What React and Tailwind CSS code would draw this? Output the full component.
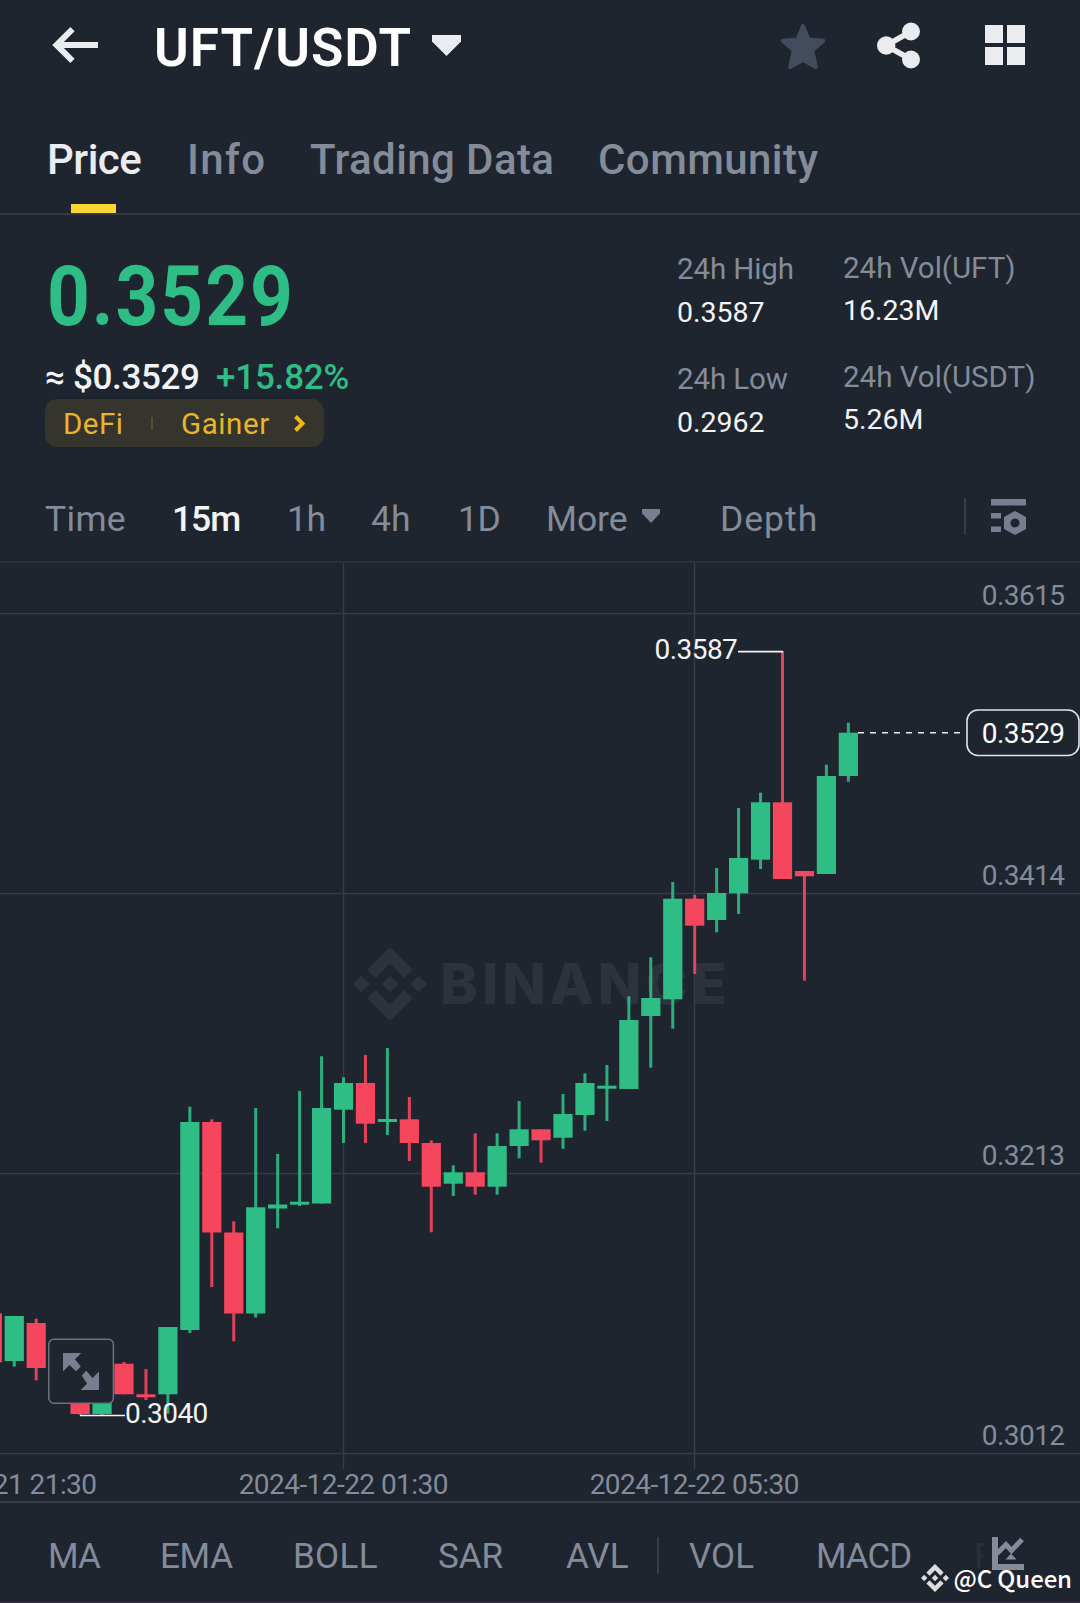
import React from 'react';

const UP = '#2ebd85';
const DOWN = '#f6465d';
const GRID = '#363c48';
const MUTED = '#848b99';

const TABS = [
  { label: 'Price', box: 'w-[140px]', text: 'tracking-[-0.5px]', active: true },
  { label: 'Info', box: 'w-[123px]', text: 'tracking-[1.4px]' },
  { label: 'Trading Data', box: 'w-[288px]', text: 'tracking-[0.4px]' },
  { label: 'Community', box: 'w-[240px]', text: 'tracking-[0.45px]' },
];

const STATS = [
  [
    { label: '24h High', value: '0.3587' },
    { label: '24h Low', value: '0.2962' },
  ],
  [
    { label: '24h Vol(UFT)', value: '16.23M' },
    { label: '24h Vol(USDT)', value: '5.26M' },
  ],
];

const INTERVALS = [
  { label: 'Time', cls: 'w-[127px] tracking-[0.3px]' },
  { label: '15m', cls: 'w-[115px] tracking-[-1.1px] font-medium text-[#f3f4f8]' },
  { label: '1h', cls: 'w-[84px] tracking-[-0.4px]' },
  { label: '4h', cls: 'w-[87px]' },
  { label: '1D', cls: 'w-[88px] tracking-[-0.4px]' },
  { label: 'More', cls: 'w-[96px] tracking-[-0.1px]' },
];

const INDICATORS = [
  { label: 'MA', cls: 'w-[112px] tracking-[-0.9px]' },
  { label: 'EMA', cls: 'w-[133px] tracking-[-0.3px]' },
  { label: 'BOLL', cls: 'w-[145px] tracking-[0.3px]' },
  { label: 'SAR', cls: 'w-[128px]' },
  { label: 'AVL', cls: 'w-[91px]' },
];

// [slot, colour, high, body top, body bottom, low]
const CANDLES = [
  [-16, DOWN, 1313.3, 1313.3, 1362.3, 1362.3],
  [-15, UP, 1316, 1316, 1361, 1366.7],
  [-14, DOWN, 1318.7, 1323, 1368, 1380.3],
  [-12, DOWN, 1385, 1385, 1414, 1415],
  [-11, UP, 1385, 1385, 1414, 1415],
  [-10, DOWN, 1362, 1363.7, 1394.3, 1394.3],
  [-9, DOWN, 1369, 1394.3, 1397.3, 1400],
  [-8, UP, 1327, 1327, 1394.3, 1413.7],
  [-7, UP, 1106.7, 1122, 1330, 1333],
  [-6, DOWN, 1119.3, 1122, 1232.5, 1287],
  [-5, DOWN, 1221.3, 1232.5, 1313.5, 1341.3],
  [-4, UP, 1108, 1207.3, 1313.5, 1317.5],
  [-3, UP, 1154, 1204.5, 1208.5, 1228.3],
  [-2, UP, 1091, 1201.7, 1204.7, 1206],
  [-1, UP, 1056.3, 1108, 1203.5, 1203.5],
  [0, UP, 1077.3, 1083, 1109.7, 1143],
  [1, DOWN, 1055, 1083, 1123.7, 1143],
  [2, UP, 1048, 1119, 1122, 1135],
  [3, DOWN, 1097, 1119.3, 1143, 1161],
  [4, DOWN, 1140.3, 1143, 1186.7, 1232.3],
  [5, UP, 1165.3, 1172.3, 1183.7, 1196],
  [6, DOWN, 1133.3, 1172.3, 1186.7, 1194.7],
  [7, UP, 1133.3, 1146, 1186.7, 1194.7],
  [8, UP, 1101, 1129.3, 1146, 1158.3],
  [9, DOWN, 1129.3, 1129.3, 1140.3, 1162.7],
  [10, UP, 1094, 1114, 1137.7, 1148.7],
  [11, UP, 1073.3, 1083, 1115, 1130.7],
  [12, UP, 1065, 1085.7, 1088.7, 1121],
  [13, UP, 996.3, 1020, 1089, 1089],
  [14, UP, 957.3, 998, 1016, 1067.7],
  [15, UP, 882, 898.7, 999.3, 1028.7],
  [16, DOWN, 894.7, 898.7, 925.7, 974],
  [17, UP, 868, 893, 920, 932.3],
  [18, UP, 808, 858, 893.3, 914],
  [19, UP, 792.7, 802.3, 859.7, 869],
  [20, DOWN, 651, 802.3, 879, 879],
  [21, DOWN, 871, 871, 876.3, 980.7],
  [22, UP, 764.7, 776, 874, 874],
  [23, UP, 722.7, 732.7, 776, 781.7],
];

const LEVELS = [
  { y: 613.5, label: '0.3615' },
  { y: 893.5, label: '0.3414' },
  { y: 1173.5, label: '0.3213' },
  { y: 1453.5, label: '0.3012' },
];

function Caret({ className }) {
  return (
    <svg viewBox="0 0 28 21" preserveAspectRatio="none" className={className} fill="currentColor">
      <path d="M0 0h28v6.5L14 21 0 6.5z" />
    </svg>
  );
}

function BinanceMark({ className }) {
  return (
    <svg viewBox="0 0 126.61 126.61" className={className} fill="currentColor">
      <path d="M38.73 53.2 63.3 28.63 87.89 53.21l14.3-14.3L63.3 0 24.43 38.9z" />
      <path d="M0 63.31 14.3 49l14.3 14.3-14.3 14.3z" />
      <path d="M38.73 73.41 63.3 97.98l24.59-24.58 14.31 14.29L63.3 126.61 24.43 87.74z" />
      <path d="M98 63.31 112.3 49l14.31 14.3-14.31 14.3z" />
      <path d="m77.83 63.3-14.53-14.51L48.79 63.3 63.3 77.82z" />
    </svg>
  );
}

function Header() {
  return (
    <header className="flex h-[94px] items-start text-[#eaecef]">
      <svg viewBox="0 0 46 36" className="ml-[52px] mt-[27px] h-9 w-[46px] shrink-0" fill="none" stroke="currentColor" strokeWidth="6">
        <path d="M20.5 2.2 4.5 18l16 15.8M5 18h41" />
      </svg>
      <h1 className="ml-[56px] mt-[18px] w-[278px] whitespace-nowrap text-[53px] font-semibold leading-[60px] tracking-[1px] text-white">UFT/USDT</h1>
      <Caret className="mt-[35px] h-[21px] w-[29px] shrink-0" />
      <svg viewBox="0 0 46 48" className="ml-[319px] mt-[22px] h-12 w-[46px] shrink-0 text-[#434c5c]" fill="currentColor" stroke="currentColor" strokeWidth="4" strokeLinejoin="round">
        <path d="m23 4 5.6 13.4 14.6 1.3-11 9.7 3.7 16.6L23 38l-12.9 7 3.7-16.6-11-9.7 14.6-1.3z" />
      </svg>
      <svg viewBox="0 0 43 47" className="ml-[51px] mt-[22px] h-[47px] w-[43px] shrink-0" fill="currentColor">
        <path d="M34 9.5 9 23.5l25 14" fill="none" stroke="currentColor" strokeWidth="5.5" />
        <circle cx="34" cy="9.5" r="9" />
        <circle cx="9.2" cy="23.5" r="9.2" />
        <circle cx="34" cy="37.5" r="9" />
      </svg>
      <div className="ml-[65px] mt-[25px] grid grid-cols-2 gap-1">
        <span className="h-[18px] w-[18px] bg-current" />
        <span className="h-[18px] w-[18px] bg-current" />
        <span className="h-[18px] w-[18px] bg-current" />
        <span className="h-[18px] w-[18px] bg-current" />
      </div>
    </header>
  );
}

function Tabs() {
  return (
    <nav className="flex h-[121px] border-b-2 border-[#333943] pl-[47px] pt-[46px] text-[42px] font-medium leading-10">
      {TABS.map((tab) => (
        <div key={tab.label} className={`shrink-0 whitespace-nowrap ${tab.box} ${tab.active ? 'text-[#eaecef]' : 'text-[#848b99]'}`}>
          <span className={tab.text}>{tab.label}</span>
          {tab.active && <div className="ml-6 mt-[24px] h-[9px] w-[45px] bg-[#fcd535]" />}
        </div>
      ))}
    </nav>
  );
}

function Summary() {
  return (
    <section className="flex h-[257px] pl-[45px]">
      <div className="w-[632px] pt-[47px]">
        <p className="ml-[2px] origin-left scale-x-90 whitespace-nowrap text-[83px] font-bold leading-[70px] tracking-[2.2px] text-[#2ebd85]">0.3529</p>
        <div className="mt-[28px] flex whitespace-nowrap text-[35px] font-medium leading-9">
          <span className="w-[171px] tracking-[-0.35px] text-[#f3f4f8]">≈ $0.3529</span>
          <span className="tracking-[-0.2px] text-[#2ebd85]">+15.82%</span>
        </div>
        <div className="mt-[3px] flex h-12 w-[279px] items-center rounded-xl bg-[#35342d] pl-[18px] text-[29.5px] text-[#e8b62b]">
          <span className="w-[88px] pt-[2px] tracking-[0.5px]">DeFi</span>
          <span className="h-[13px] w-[2px] bg-[#5c4d28]" />
          <span className="ml-[28px] w-[113px] pt-[2px] tracking-[0.6px]">Gainer</span>
          <svg viewBox="0 0 12 17" className="h-[17px] w-3" fill="none" stroke="#f0b90b" strokeWidth="4">
            <path d="m1.5 1.5 7 7-7 7" />
          </svg>
        </div>
      </div>
      <div className="w-[166px] pt-[34px]">
        {STATS[0].map((s) => (
          <div key={s.label} className="h-[110px] whitespace-nowrap">
            <p className="text-[29.5px] leading-[40px] tracking-[-0.1px] text-[#848b99]">{s.label}</p>
            <p className="mt-[3px] text-[28.5px] leading-[42px] text-[#f3f4f8]">{s.value}</p>
          </div>
        ))}
      </div>
      <div className="pt-[33px]">
        {STATS[1].map((s) => (
          <div key={s.label} className="h-[109px] whitespace-nowrap">
            <p className="text-[29.5px] leading-[40px] text-[#848b99]">{s.label}</p>
            <p className="mt-[2px] text-[28.5px] leading-[42px] text-[#f3f4f8]">{s.value}</p>
          </div>
        ))}
      </div>
    </section>
  );
}

function Intervals() {
  return (
    <div className="flex h-[91px] items-center border-b-2 border-[#2b313b] pl-[45px] text-[35.5px] text-[#848b99]">
      {INTERVALS.map((it) => (
        <span key={it.label} className={`shrink-0 whitespace-nowrap pt-[7px] ${it.cls}`}>{it.label}</span>
      ))}
      <Caret className="-mt-[2px] h-[14px] w-[18px] text-[#767e8f]" />
      <span className="ml-[60px] w-[244px] pt-[7px] tracking-[1px]">Depth</span>
      <span className="h-[37px] w-[2px] bg-[#363c48]" />
      <svg viewBox="0 0 35 36" className="ml-[25px] h-9 w-[35px]" fill="#767e8f">
        <path d="M0 0h35v6.5H0zM0 14h10v5.5H0zM0 27.5h10V33H0z" />
        <path fillRule="evenodd" d="M24 12l11 6v12l-11 6-11-6V18zM24 19.5a4.5 4.5 0 1 0 0 9 4.5 4.5 0 0 0 0-9z" />
      </svg>
    </div>
  );
}

function Chart() {
  return (
    <div className="relative h-[938px]">
      <div className="absolute left-[353px] top-[384px] flex items-center text-[#2d323c]">
        <BinanceMark className="h-[74px] w-[74px]" />
        <span className="ml-[13px] font-[Inter] text-[57px] font-extrabold leading-[74px] tracking-[4px]">BINANCE</span>
      </div>
      <svg viewBox="0 563 1080 938" className="absolute inset-0 h-[938px] w-[1080px]" fontSize="28" letterSpacing="-0.55" fontFamily="Roboto, sans-serif">
        {LEVELS.map((l) => (
          <g key={l.label}>
            <path d={`M0 ${l.y}H1080`} stroke={GRID} strokeWidth="1.5" />
            <text x="1064.5" y={l.y - 8.5} textAnchor="end" fill={MUTED}>{l.label}</text>
          </g>
        ))}
        <path d="M343.5 563V1469M694.5 563V1469" stroke={GRID} strokeWidth="1.5" />

        {CANDLES.map(([slot, color, high, top, bottom, low]) => {
          const x = 343.5 + slot * 21.95;
          return (
            <g key={slot} fill={color}>
              <rect x={x - 1.5} y={high} width="3" height={low - high} opacity="0.9" />
              <rect x={x - 9.6} y={top} width="19.2" height={bottom - top} />
            </g>
          );
        })}

        <path d="M738 651.7H783M80 1415.5H125" stroke="#f3f4f8" strokeWidth="1.7" />
        <text x="654.5" y="659" fill="#f3f4f8">0.3587</text>
        <text x="125" y="1423" fill="#f3f4f8">0.3040</text>

        <path d="M858 732.7H961" stroke="#eaecef" strokeWidth="1.6" strokeDasharray="6 6" />
        <rect x="967" y="710" width="112" height="45.5" rx="11" fill="#1f252f" stroke="#e1e4ea" strokeWidth="1.6" />
        <text x="1064.5" y="743" textAnchor="end" fill="#fff">0.3529</text>

        <g fill={MUTED}>
          <text x="96.5" y="1494" textAnchor="end">2024-12-21 21:30</text>
          <text x="343.3" y="1494" textAnchor="middle">2024-12-22 01:30</text>
          <text x="694.3" y="1494" textAnchor="middle">2024-12-22 05:30</text>
        </g>

        <rect x="48.8" y="1339.3" width="64.6" height="64" rx="5" fill="#1f252f" stroke="#6b7382" strokeWidth="1.5" />
        <g fill="#767e8f">
          <path d="M63 1353H81.300L75 1359.300 80.800 1366.500 76 1371.200 69.500 1365 63 1371.500z" />
          <path d="M99 1390H80.700L87 1383.700 81.700 1375.500 86.200 1370.800 92.500 1378 99 1371.500z" />
        </g>
      </svg>
    </div>
  );
}

function Indicators() {
  return (
    <footer className="relative flex h-[102px] items-center border-b border-t-2 border-b-[#383545] border-t-[#363c48] pb-[2px] pl-[48px] pt-[8px] text-[35px] text-[#848b99]">
      {INDICATORS.map((it) => (
        <span key={it.label} className={`shrink-0 pt-[4px] ${it.cls}`}>{it.label}</span>
      ))}
      <span className="h-[37px] w-[2px] bg-[#363c48]" />
      <span className="ml-[30px] w-[127px] pt-[4px]">VOL</span>
      <span className="w-[158px] pt-[4px] tracking-[-1px]">MACD</span>
      <span className="mr-[8px] w-[10px] overflow-hidden pt-[4px] text-[#2a313b]">R</span>
      <svg viewBox="0 0 32 33" className="-mt-1 h-[33px] w-8 shrink-0" fill="#848b99">
        <path d="M0 0h6v27h26v6H0z" />
        <path d="m5 16.500 9-9 5.500 6L30 2.500" fill="none" stroke="#848b99" strokeWidth="5" />
        <path d="m19 16.500 5.500 6h-11z" />
      </svg>
      <div className="absolute right-[8px] top-[61px] flex items-center text-white">
        <BinanceMark className="h-7 w-7 text-[#dcdddf]" />
        <span className="ml-1 whitespace-nowrap font-['Noto_Sans_CJK_SC'] text-[24px] font-medium leading-7 tracking-[-0.1px]">@C Queen</span>
      </div>
    </footer>
  );
}

export default function App() {
  return (
    <main className="h-[1603px] w-[1080px] overflow-hidden bg-[#1f252f] font-[Roboto,sans-serif]">
      <Header />
      <Tabs />
      <Summary />
      <Intervals />
      <Chart />
      <Indicators />
    </main>
  );
}
